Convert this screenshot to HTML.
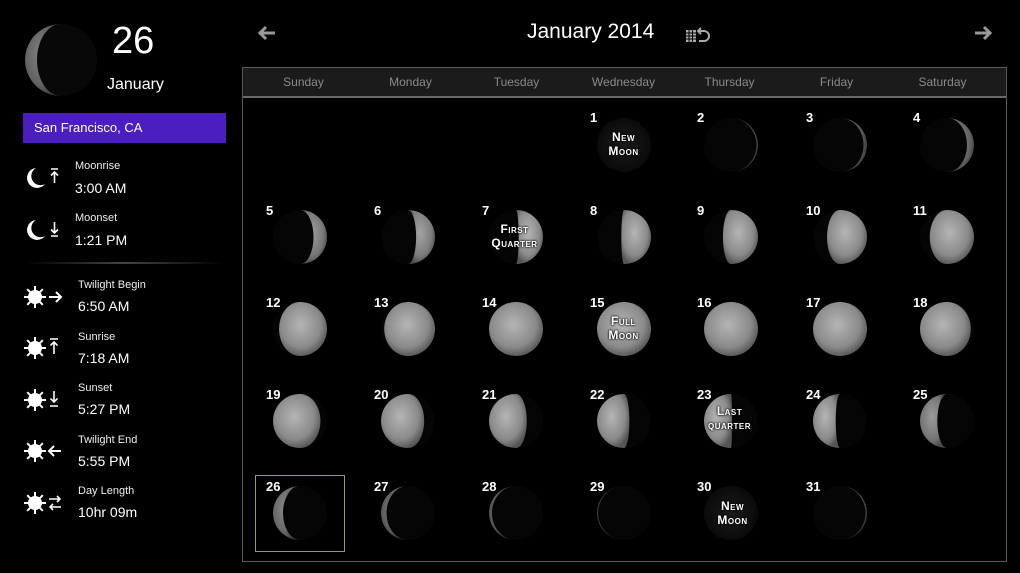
<!DOCTYPE html>
<html><head><meta charset="utf-8"><style>
*{margin:0;padding:0;box-sizing:border-box}
body{width:1020px;height:573px;background:#000;overflow:hidden;position:relative;font-family:"Segoe UI","Liberation Sans",sans-serif;color:#fff}
.a{position:absolute;white-space:nowrap}
.lbl{font-size:11px;color:#eee}
.val{font-size:14px;color:#fff}
.hd{position:absolute;top:68px;height:29px;line-height:29px;font-size:12px;color:#8a8a8a;text-align:center;width:109px}
.n{position:absolute;font-size:13px;font-weight:bold;color:#fff}
.m{position:absolute;width:60px;height:60px}
.tag{position:absolute;width:109px;text-align:center;font-family:"Liberation Sans",sans-serif;font-weight:bold;font-variant:small-caps;font-size:12px;line-height:14px;letter-spacing:0.5px;color:#fff;text-shadow:0 0 2px #000,0 0 2px #000}
</style></head><body>
<svg width="0" height="0" style="position:absolute"><defs>
<radialGradient id="g" cx="45%" cy="42%" r="60%"><stop offset="0" stop-color="#b5b5b5"/><stop offset="0.7" stop-color="#8a8a8a"/><stop offset="1" stop-color="#555"/></radialGradient>
<radialGradient id="d" cx="50%" cy="50%" r="50%"><stop offset="0" stop-color="#1c1c1c"/><stop offset="1" stop-color="#0a0a0a"/></radialGradient>
</defs></svg>

<!-- left panel -->
<svg class="a" style="left:23px;top:22px" width="76" height="76"><circle cx="38" cy="38" r="36" fill="#080808"/><path d="M38 2 A36 36 0 0 0 38 74 A24 36 0 0 1 38 2Z" fill="url(#g)" opacity="0.7"/></svg>
<div class="a" style="left:112px;top:20px;font-size:38px;font-weight:300">26</div>
<div class="a" style="left:107px;top:76px;font-size:16px">January</div>
<div class="a" style="left:23px;top:113px;width:203px;height:30px;background:#4a1ec0;font-size:13px;line-height:30px;padding-left:11px">San Francisco, CA</div>

<svg class="a" style="left:24px;top:166px" width="36" height="24"><path d="M12 2 A10 10 0 1 0 21 18 A9 9 0 0 1 12 2Z" fill="#fff"/><path d="M27 3h7M30.5 6v11M27 9.5l3.5-3.5 3.5 3.5" stroke="#fff" stroke-width="1.6" fill="none"/></svg>
<div class="a lbl" style="left:75px;top:160px">Moonrise</div>
<div class="a val" style="left:75px;top:180px">3:00 AM</div>
<svg class="a" style="left:24px;top:218px" width="36" height="24"><path d="M12 2 A10 10 0 1 0 21 18 A9 9 0 0 1 12 2Z" fill="#fff"/><path d="M30.5 4v11M27 11.5l3.5 3.5 3.5-3.5M27 18h7" stroke="#fff" stroke-width="1.6" fill="none"/></svg>
<div class="a lbl" style="left:75px;top:212px">Moonset</div>
<div class="a val" style="left:75px;top:232px">1:21 PM</div>
<div class="a" style="left:25px;top:262px;width:200px;height:2px;background:linear-gradient(90deg,#000,#444 50%,#000)"></div>

<svg class="a" style="left:24px;top:284px" width="40" height="26"><g fill="#fff"><circle cx="11" cy="13" r="7"/><g stroke="#fff" stroke-width="2"><path d="M11 2v22M0 13h22M3.2 5.2l15.6 15.6M18.8 5.2L3.2 20.8"/></g></g><path d="M25 13h12M32 8l5 5-5 5" stroke="#fff" stroke-width="2" fill="none"/></svg>
<div class="a lbl" style="left:78px;top:279px">Twilight Begin</div>
<div class="a val" style="left:78px;top:298px">6:50 AM</div>
<svg class="a" style="left:24px;top:335px" width="40" height="26"><g fill="#fff"><circle cx="11" cy="13" r="7"/><g stroke="#fff" stroke-width="2"><path d="M11 2v22M0 13h22M3.2 5.2l15.6 15.6M18.8 5.2L3.2 20.8"/></g></g><path d="M26 4h8M30 7v12M26.5 10.5L30 7l3.5 3.5" stroke="#fff" stroke-width="1.6" fill="none"/></svg>
<div class="a lbl" style="left:78px;top:331px">Sunrise</div>
<div class="a val" style="left:78px;top:350px">7:18 AM</div>
<svg class="a" style="left:24px;top:387px" width="40" height="26"><g fill="#fff"><circle cx="11" cy="13" r="7"/><g stroke="#fff" stroke-width="2"><path d="M11 2v22M0 13h22M3.2 5.2l15.6 15.6M18.8 5.2L3.2 20.8"/></g></g><path d="M30 4v11M26.5 11.5L30 15l3.5-3.5M26 19h8" stroke="#fff" stroke-width="1.6" fill="none"/></svg>
<div class="a lbl" style="left:78px;top:382px">Sunset</div>
<div class="a val" style="left:78px;top:401px">5:27 PM</div>
<svg class="a" style="left:24px;top:438px" width="40" height="26"><g fill="#fff"><circle cx="11" cy="13" r="7"/><g stroke="#fff" stroke-width="2"><path d="M11 2v22M0 13h22M3.2 5.2l15.6 15.6M18.8 5.2L3.2 20.8"/></g></g><path d="M25 13h12M30 8l-5 5 5 5" stroke="#fff" stroke-width="2" fill="none"/></svg>
<div class="a lbl" style="left:78px;top:434px">Twilight End</div>
<div class="a val" style="left:78px;top:453px">5:55 PM</div>
<svg class="a" style="left:24px;top:490px" width="40" height="26"><g fill="#fff"><circle cx="11" cy="13" r="7"/><g stroke="#fff" stroke-width="2"><path d="M11 2v22M0 13h22M3.2 5.2l15.6 15.6M18.8 5.2L3.2 20.8"/></g></g><path d="M25 9h11M33 6l3 3-3 3M37 17H26M29 14l-3 3 3 3" stroke="#fff" stroke-width="1.6" fill="none"/></svg>
<div class="a lbl" style="left:78px;top:485px">Day Length</div>
<div class="a val" style="left:78px;top:504px">10hr 09m</div>

<!-- top nav -->
<svg class="a" style="left:257px;top:25px" width="20" height="16"><path d="M2 8h16M9 2L3 8l6 6" stroke="#9a9a9a" stroke-width="3" fill="none"/></svg>
<div class="a" style="left:527px;top:20px;font-size:21px">January 2014</div>
<svg class="a" style="left:685px;top:26px" width="28" height="18"><g fill="#aaa"><rect x="1" y="4" width="10" height="12"/></g><g stroke="#000" stroke-width="1"><path d="M1 7h10M1 10h10M1 13h10M4 4v12M7.5 4v12"/></g><path d="M13 5h6a5 5 0 0 1 0 10h-5M16 2l-3 3 3 3" stroke="#aaa" stroke-width="2" fill="none"/></svg>
<svg class="a" style="left:973px;top:25px" width="20" height="16"><path d="M2 8h16M11 2l6 6-6 6" stroke="#9a9a9a" stroke-width="3" fill="none"/></svg>

<!-- grid -->
<div class="a" style="left:242px;top:67px;width:765px;height:495px;border:1px solid #5a5a5a"></div>
<div class="a" style="left:243px;top:68px;width:763px;height:30px;background:#1b1b1b;border-bottom:2px solid #6a6a6a"></div>
<div class="hd" style="left:249px">Sunday</div>
<div class="hd" style="left:356px">Monday</div>
<div class="hd" style="left:462px">Tuesday</div>
<div class="hd" style="left:569px">Wednesday</div>
<div class="hd" style="left:675px">Thursday</div>
<div class="hd" style="left:782px">Friday</div>
<div class="hd" style="left:888px">Saturday</div>

<div class="a" style="left:255px;top:475px;width:90px;height:77px;border:1px solid #9c9a60"></div>

<!-- row 0 -->
<svg class="m" style="left:594px;top:115px"><circle cx="30" cy="30" r="27" fill="url(#d)"/></svg>
<div class="n" style="left:590px;top:110px">1</div>
<div class="tag" style="left:569px;top:130px">New<br>Moon</div>
<svg class="m" style="left:701px;top:115px"><circle cx="30" cy="30" r="27" fill="#050505"/><path d="M30 3 A27 27 0 0 1 30 57 A25.4 27 0 0 0 30 3Z" fill="url(#g)" opacity="0.55"/></svg>
<div class="n" style="left:697px;top:110px">2</div>
<svg class="m" style="left:810px;top:115px"><circle cx="30" cy="30" r="27" fill="#050505"/><path d="M30 3 A27 27 0 0 1 30 57 A23.5 27 0 0 0 30 3Z" fill="url(#g)" opacity="0.6"/></svg>
<div class="n" style="left:806px;top:110px">3</div>
<svg class="m" style="left:917px;top:115px"><circle cx="30" cy="30" r="27" fill="#050505"/><path d="M30 3 A27 27 0 0 1 30 57 A20 27 0 0 0 30 3Z" fill="url(#g)" opacity="0.7"/></svg>
<div class="n" style="left:913px;top:110px">4</div>

<!-- row 1 -->
<svg class="m" style="left:270px;top:207px"><circle cx="30" cy="30" r="27" fill="#050505"/><path d="M30 3 A27 27 0 0 1 30 57 A13.5 27 0 0 0 30 3Z" fill="url(#g)" opacity="0.85"/></svg>
<div class="n" style="left:266px;top:203px">5</div>
<svg class="m" style="left:378px;top:207px"><circle cx="30" cy="30" r="27" fill="#050505"/><path d="M30 3 A27 27 0 0 1 30 57 A8.1 27 0 0 0 30 3Z" fill="url(#g)" opacity="0.9"/></svg>
<div class="n" style="left:374px;top:203px">6</div>
<svg class="m" style="left:486px;top:207px"><circle cx="30" cy="30" r="27" fill="#050505"/><path d="M30 3 A27 27 0 0 1 30 57 A2.7 27 0 0 0 30 3Z" fill="url(#g)"/></svg>
<div class="n" style="left:482px;top:203px">7</div>
<div class="tag" style="left:460px;top:222px">First<br>Quarter</div>
<svg class="m" style="left:594px;top:207px"><circle cx="30" cy="30" r="27" fill="#050505"/><path d="M30 3 A27 27 0 0 1 30 57 A2.7 27 0 0 1 30 3Z" fill="url(#g)"/></svg>
<div class="n" style="left:590px;top:203px">8</div>
<svg class="m" style="left:701px;top:207px"><circle cx="30" cy="30" r="27" fill="#050505"/><path d="M30 3 A27 27 0 0 1 30 57 A8.1 27 0 0 1 30 3Z" fill="url(#g)"/></svg>
<div class="n" style="left:697px;top:203px">9</div>
<svg class="m" style="left:810px;top:207px"><circle cx="30" cy="30" r="27" fill="#050505"/><path d="M30 3 A27 27 0 0 1 30 57 A13 27 0 0 1 30 3Z" fill="url(#g)"/></svg>
<div class="n" style="left:806px;top:203px">10</div>
<svg class="m" style="left:917px;top:207px"><circle cx="30" cy="30" r="27" fill="#050505"/><path d="M30 3 A27 27 0 0 1 30 57 A17.3 27 0 0 1 30 3Z" fill="url(#g)"/></svg>
<div class="n" style="left:913px;top:203px">11</div>

<!-- row 2 -->
<svg class="m" style="left:270px;top:299px"><circle cx="30" cy="30" r="27" fill="#050505"/><path d="M30 3 A27 27 0 0 1 30 57 A21 27 0 0 1 30 3Z" fill="url(#g)"/></svg>
<div class="n" style="left:266px;top:295px">12</div>
<svg class="m" style="left:378px;top:299px"><circle cx="30" cy="30" r="27" fill="#050505"/><path d="M30 3 A27 27 0 0 1 30 57 A23.8 27 0 0 1 30 3Z" fill="url(#g)"/></svg>
<div class="n" style="left:374px;top:295px">13</div>
<svg class="m" style="left:486px;top:299px"><circle cx="30" cy="30" r="27" fill="url(#g)"/></svg>
<div class="n" style="left:482px;top:295px">14</div>
<svg class="m" style="left:594px;top:299px"><circle cx="30" cy="30" r="27" fill="url(#g)"/></svg>
<div class="n" style="left:590px;top:295px">15</div>
<div class="tag" style="left:569px;top:314px">Full<br>Moon</div>
<svg class="m" style="left:701px;top:299px"><circle cx="30" cy="30" r="27" fill="url(#g)"/></svg>
<div class="n" style="left:697px;top:295px">16</div>
<svg class="m" style="left:810px;top:299px"><circle cx="30" cy="30" r="27" fill="url(#g)"/></svg>
<div class="n" style="left:806px;top:295px">17</div>
<svg class="m" style="left:917px;top:299px"><circle cx="30" cy="30" r="27" fill="#050505"/><path d="M30 3 A27 27 0 0 0 30 57 A23.8 27 0 0 0 30 3Z" fill="url(#g)"/></svg>
<div class="n" style="left:913px;top:295px">18</div>

<!-- row 3 -->
<svg class="m" style="left:270px;top:391px"><circle cx="30" cy="30" r="27" fill="#050505"/><path d="M30 3 A27 27 0 0 0 30 57 A20.5 27 0 0 0 30 3Z" fill="url(#g)"/></svg>
<div class="n" style="left:266px;top:387px">19</div>
<svg class="m" style="left:378px;top:391px"><circle cx="30" cy="30" r="27" fill="#050505"/><path d="M30 3 A27 27 0 0 0 30 57 A16.2 27 0 0 0 30 3Z" fill="url(#g)"/></svg>
<div class="n" style="left:374px;top:387px">20</div>
<svg class="m" style="left:486px;top:391px"><circle cx="30" cy="30" r="27" fill="#050505"/><path d="M30 3 A27 27 0 0 0 30 57 A10.8 27 0 0 0 30 3Z" fill="url(#g)"/></svg>
<div class="n" style="left:482px;top:387px">21</div>
<svg class="m" style="left:594px;top:391px"><circle cx="30" cy="30" r="27" fill="#050505"/><path d="M30 3 A27 27 0 0 0 30 57 A5.4 27 0 0 0 30 3Z" fill="url(#g)"/></svg>
<div class="n" style="left:590px;top:387px">22</div>
<svg class="m" style="left:701px;top:391px"><circle cx="30" cy="30" r="27" fill="#050505"/><path d="M30 3 A27 27 0 0 0 30 57 A1 27 0 0 0 30 3Z" fill="url(#g)"/></svg>
<div class="n" style="left:697px;top:387px">23</div>
<div class="tag" style="left:675px;top:404px">Last<br>quarter</div>
<svg class="m" style="left:810px;top:391px"><circle cx="30" cy="30" r="27" fill="#050505"/><path d="M30 3 A27 27 0 0 0 30 57 A4.3 27 0 0 1 30 3Z" fill="url(#g)"/></svg>
<div class="n" style="left:806px;top:387px">24</div>
<svg class="m" style="left:917px;top:391px"><circle cx="30" cy="30" r="27" fill="#050505"/><path d="M30 3 A27 27 0 0 0 30 57 A9.7 27 0 0 1 30 3Z" fill="url(#g)" opacity="0.85"/></svg>
<div class="n" style="left:913px;top:387px">25</div>

<!-- row 4 -->
<svg class="m" style="left:270px;top:483px"><circle cx="30" cy="30" r="27" fill="#050505"/><path d="M30 3 A27 27 0 0 0 30 57 A17 27 0 0 1 30 3Z" fill="url(#g)" opacity="0.75"/></svg>
<div class="n" style="left:266px;top:479px">26</div>
<svg class="m" style="left:378px;top:483px"><circle cx="30" cy="30" r="27" fill="#050505"/><path d="M30 3 A27 27 0 0 0 30 57 A21.5 27 0 0 1 30 3Z" fill="url(#g)" opacity="0.65"/></svg>
<div class="n" style="left:374px;top:479px">27</div>
<svg class="m" style="left:486px;top:483px"><circle cx="30" cy="30" r="27" fill="#050505"/><path d="M30 3 A27 27 0 0 0 30 57 A24 27 0 0 1 30 3Z" fill="url(#g)" opacity="0.6"/></svg>
<div class="n" style="left:482px;top:479px">28</div>
<svg class="m" style="left:594px;top:483px"><circle cx="30" cy="30" r="27" fill="#050505"/><path d="M30 3 A27 27 0 0 0 30 57 A25.9 27 0 0 1 30 3Z" fill="url(#g)" opacity="0.45"/></svg>
<div class="n" style="left:590px;top:479px">29</div>
<svg class="m" style="left:701px;top:483px"><circle cx="30" cy="30" r="27" fill="url(#d)"/></svg>
<div class="n" style="left:697px;top:479px">30</div>
<div class="tag" style="left:678px;top:499px">New<br>Moon</div>
<svg class="m" style="left:810px;top:483px"><circle cx="30" cy="30" r="27" fill="#050505"/><path d="M30 3 A27 27 0 0 1 30 57 A25.4 27 0 0 0 30 3Z" fill="url(#g)" opacity="0.55"/></svg>
<div class="n" style="left:806px;top:479px">31</div>
</body></html>
